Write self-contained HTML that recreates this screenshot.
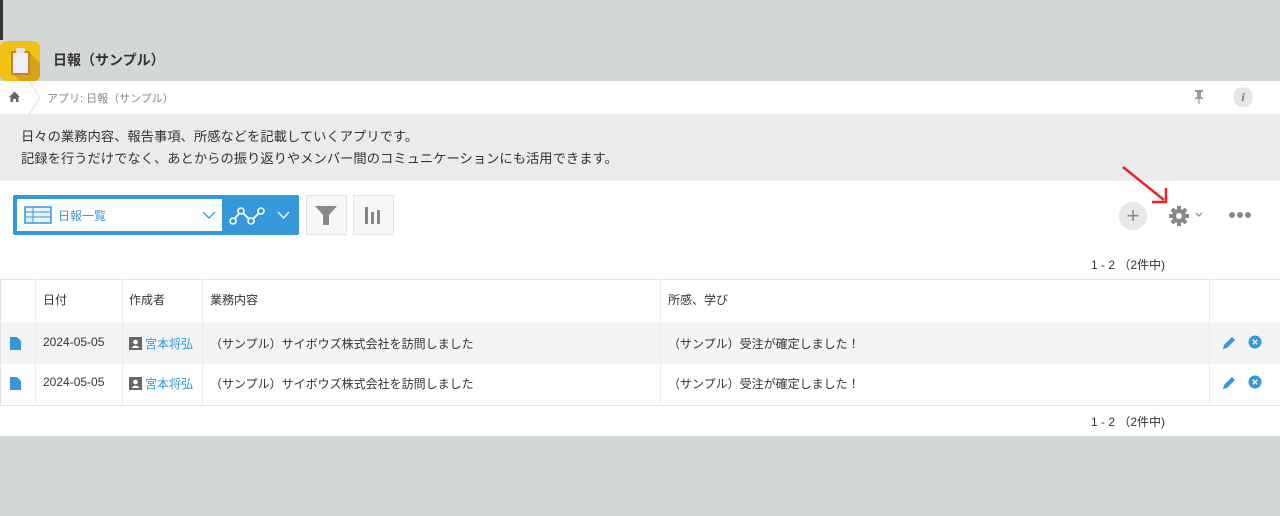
<!DOCTYPE html>
<html><head><meta charset="utf-8">
<style>
*{margin:0;padding:0;box-sizing:border-box}
body{width:1280px;height:516px;background:#d4d7d8;font-family:"Liberation Sans","Noto Sans CJK JP",sans-serif;position:relative;overflow:hidden;color:#333}
.abs{position:absolute}
.t{font-size:12px;color:#333}
</style></head><body>
<div class="abs" style="left:0;top:0;width:3px;height:40px;background:#333"></div>
<div class="abs" style="left:0;top:41px;width:40px;height:40px;border-radius:6px;background:#f0c116;overflow:hidden">
 <svg class="abs" style="left:0;top:0" width="40" height="40"><path d="M12 32L20 40H40V22L30 12Z" fill="#d9a214"/></svg>
 <div class="abs" style="left:11px;top:10px;width:19px;height:24px;background:#c47f3e;border-radius:2px"></div>
 <div class="abs" style="left:13px;top:12px;width:15px;height:20px;background:#eef1f4"></div>
 <div class="abs" style="left:16px;top:7px;width:9px;height:5px;background:#dfe3e6;border-radius:2px"></div>
</div>
<div class="abs" style="left:53px;top:50px;font-size:14px;font-weight:bold;color:#333">日報（サンプル）</div>
<div class="abs" style="left:0;top:81px;width:1280px;height:33px;background:#fff"></div>
<svg class="abs" style="left:8px;top:90px" width="13" height="13" viewBox="0 0 13 13"><path d="M1 7L6.5 1.5 12 7H10.5V12H8V9H5V12H2.5V7Z" fill="#666"/></svg>
<svg class="abs" style="left:28px;top:81px" width="14" height="33"><path d="M1 0L12 16.5 1 33" fill="none" stroke="#ddd"/></svg>
<div class="abs" style="left:47px;top:90px;font-size:11px;color:#888">アプリ: 日報（サンプル）</div>
<svg class="abs" style="left:1193px;top:89px" width="12" height="15"><path d="M2 1H10V3H8V8L10 9V10H2V9L4 8V3H2Z" fill="#999"/><rect x="5.4" y="10" width="1.2" height="5" fill="#999"/></svg>
<div class="abs" style="left:1233px;top:87px;width:20px;height:20px;border-radius:50%;background:#e4e6e8;text-align:center;font:italic bold 12px/20px 'Liberation Serif',serif;color:#777">i</div>
<div class="abs" style="left:0;top:114px;width:1280px;height:67px;background:#ebebeb"></div>
<div class="abs" style="left:1238px;top:108px;width:0;height:0;border:6px solid transparent;border-bottom-color:#ebebeb"></div>
<div class="abs t" style="left:21px;top:126px;font-size:13.3px;line-height:22px">日々の業務内容、報告事項、所感などを記載していくアプリです。<br>記録を行うだけでなく、あとからの振り返りやメンバー間のコミュニケーションにも活用できます。</div>
<div class="abs" style="left:0;top:181px;width:1280px;height:255px;background:#fff"></div>
<div class="abs" style="left:13px;top:195px;width:286px;height:40px;background:#3498db;border-radius:2px"></div>
<div class="abs" style="left:17px;top:199px;width:205px;height:32px;background:#fff"></div>
<svg class="abs" style="left:24px;top:206px" width="28" height="18"><rect x="1" y="1" width="26" height="16" fill="#e8f2fb" stroke="#3498db" stroke-width="1.5"/><path d="M1 6H27M1 11H27M9 1V17" stroke="#3498db"/></svg>
<div class="abs" style="left:58px;top:207px;font-size:12px;color:#3498db">日報一覧</div>
<svg class="abs" style="left:202px;top:211px" width="14" height="9"><path d="M1 1L7 7 13 1" fill="none" stroke="#3498db" stroke-width="1.3"/></svg>
<svg class="abs" style="left:229px;top:203px" width="36" height="24"><path d="M4 18L12 8 22 18 32 8" fill="none" stroke="#fff" stroke-width="2"/><circle cx="4" cy="18" r="3" fill="#3498db" stroke="#fff" stroke-width="1.6"/><circle cx="12" cy="8" r="3" fill="#3498db" stroke="#fff" stroke-width="1.6"/><circle cx="22" cy="18" r="3" fill="#3498db" stroke="#fff" stroke-width="1.6"/><circle cx="32" cy="8" r="3" fill="#3498db" stroke="#fff" stroke-width="1.6"/></svg>
<svg class="abs" style="left:277px;top:211px" width="13" height="9"><path d="M1 1L6.5 7 12 1" fill="none" stroke="#fff" stroke-width="1.3"/></svg>
<div class="abs" style="left:306px;top:195px;width:41px;height:40px;background:#f7f7f7;border:1px solid #e3e3e3"></div>
<svg class="abs" style="left:314px;top:203px" width="24" height="24"><path d="M1 3H23L15 12V22H9V12Z" fill="#888"/></svg>
<div class="abs" style="left:353px;top:195px;width:41px;height:40px;background:#f7f7f7;border:1px solid #e3e3e3"></div>
<svg class="abs" style="left:363px;top:205px" width="20" height="20"><rect x="2" y="2" width="3" height="17" fill="#888"/><rect x="8" y="7" width="3" height="12" fill="#888"/><rect x="14" y="5" width="3" height="14" fill="#888"/></svg>
<div class="abs" style="left:1119px;top:202px;width:28px;height:28px;border-radius:50%;background:#e8e8e8;text-align:center;font-size:22px;line-height:27px;color:#888">+</div>
<svg class="abs" style="left:1168px;top:205px" width="22" height="22" viewBox="0 0 22 22"><g fill="#888"><circle cx="11" cy="11" r="7"/><rect x="9" y="1" width="4" height="20"/><rect x="9" y="1" width="4" height="20" transform="rotate(45 11 11)"/><rect x="9" y="1" width="4" height="20" transform="rotate(90 11 11)"/><rect x="9" y="1" width="4" height="20" transform="rotate(135 11 11)"/></g><circle cx="11" cy="11" r="3" fill="#fff"/></svg>
<svg class="abs" style="left:1195px;top:212px" width="8" height="6"><path d="M1 1L4 4 7 1" fill="none" stroke="#888" stroke-width="1.2"/></svg>
<svg class="abs" style="left:1228px;top:211px" width="24" height="8"><circle cx="4" cy="4" r="3" fill="#888"/><circle cx="12" cy="4" r="3" fill="#888"/><circle cx="20" cy="4" r="3" fill="#888"/></svg>
<svg class="abs" style="left:1120px;top:165px" width="80" height="45"><path d="M3 2L44 35" stroke="#e8222e" stroke-width="2.5"/><path d="M46 23L46 37 32 37" fill="none" stroke="#e8222e" stroke-width="2.5"/></svg>
<div class="abs t" style="left:1091px;top:256px">1 - 2 （2件中)</div>
<div class="abs" style="left:0;top:279px;width:1280px;height:127px;border-top:1px solid #e3e3e3;border-bottom:1px solid #e3e3e3"></div>
<div class="abs" style="left:0;top:323px;width:1280px;height:41px;background:#f4f4f4"></div>
<div class="abs" style="left:0;top:279px;width:1px;height:127px;background:#e3e3e3"></div>
<div class="abs" style="left:35px;top:279px;width:1px;height:127px;background:#ececec"></div>
<div class="abs" style="left:122px;top:279px;width:1px;height:127px;background:#ececec"></div>
<div class="abs" style="left:202px;top:279px;width:1px;height:127px;background:#ececec"></div>
<div class="abs" style="left:660px;top:279px;width:1px;height:127px;background:#ececec"></div>
<div class="abs" style="left:1209px;top:279px;width:1px;height:127px;background:#ececec"></div>
<div class="abs t" style="left:43px;top:291px">日付</div>
<div class="abs t" style="left:129px;top:291px">作成者</div>
<div class="abs t" style="left:210px;top:291px">業務内容</div>
<div class="abs t" style="left:668px;top:291px">所感、学び</div>

<svg class="abs" style="left:10px;top:337px" width="11" height="13"><path d="M0 0H7L11 4V13H0Z" fill="#3498db"/></svg>
<div class="abs t" style="left:43px;top:335px">2024-05-05</div>
<svg class="abs" style="left:129px;top:337px" width="13" height="13"><rect width="13" height="13" fill="#666"/><circle cx="6.5" cy="5" r="2.3" fill="#fff"/><path d="M2.5 11Q6.5 6 10.5 11Z" fill="#fff"/></svg>
<div class="abs" style="left:145px;top:335px;font-size:12px;color:#3498db">宮本将弘</div>
<div class="abs t" style="left:210px;top:335px">（サンプル）サイボウズ株式会社を訪問しました</div>
<div class="abs t" style="left:668px;top:335px">（サンプル）受注が確定しました！</div>

<svg class="abs" style="left:10px;top:377px" width="11" height="13"><path d="M0 0H7L11 4V13H0Z" fill="#3498db"/></svg>
<div class="abs t" style="left:43px;top:375px">2024-05-05</div>
<svg class="abs" style="left:129px;top:377px" width="13" height="13"><rect width="13" height="13" fill="#666"/><circle cx="6.5" cy="5" r="2.3" fill="#fff"/><path d="M2.5 11Q6.5 6 10.5 11Z" fill="#fff"/></svg>
<div class="abs" style="left:145px;top:375px;font-size:12px;color:#3498db">宮本将弘</div>
<div class="abs t" style="left:210px;top:375px">（サンプル）サイボウズ株式会社を訪問しました</div>
<div class="abs t" style="left:668px;top:375px">（サンプル）受注が確定しました！</div>

<svg class="abs" style="left:1221px;top:335px" width="16" height="16"><path d="M2 14L3 10 11 2 14 5 6 13Z" fill="#3498db"/></svg>
<svg class="abs" style="left:1248px;top:335px" width="14" height="14"><circle cx="7" cy="7" r="6.5" fill="#3498db"/><path d="M4.8 4.8L9.2 9.2M9.2 4.8L4.8 9.2" stroke="#fff" stroke-width="1.4"/></svg>
<svg class="abs" style="left:1221px;top:375px" width="16" height="16"><path d="M2 14L3 10 11 2 14 5 6 13Z" fill="#3498db"/></svg>
<svg class="abs" style="left:1248px;top:375px" width="14" height="14"><circle cx="7" cy="7" r="6.5" fill="#3498db"/><path d="M4.8 4.8L9.2 9.2M9.2 4.8L4.8 9.2" stroke="#fff" stroke-width="1.4"/></svg>
<div class="abs t" style="left:1091px;top:413px">1 - 2 （2件中)</div>
</body></html>
